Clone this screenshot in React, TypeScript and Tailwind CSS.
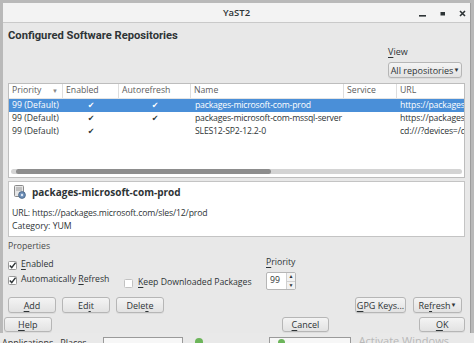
import React from "react";

const txt = "font-['Open_Sans',sans-serif] text-[#2e3436]";

function Btn({ className, children }: { className: string; children: React.ReactNode }) {
  return (
    <div
      className={
        "flex items-center justify-center whitespace-nowrap rounded-[3px] border border-[#b6b6b6] bg-gradient-to-b from-[#f4f4f4] to-[#e2e2e2] text-[9px] leading-none shadow-[0_1px_0_rgba(0,0,0,0.05)] " +
        className
      }
    >
      {children}
    </div>
  );
}

function U({ children }: { children: React.ReactNode }) {
  return <span className="underline decoration-[0.8px] underline-offset-[2px]">{children}</span>;
}

function Check({ on }: { on: boolean }) {
  return (
    <svg width="9" height="9" viewBox="0 0 9 9" className="shrink-0">
      <rect x="0.5" y="0.5" width="8" height="8" rx="1" fill="#fff" stroke={on ? "#9a9a9a" : "#c2c2c2"} />
      {on && <path d="M1.8 4.6 L3.7 6.6 L7.6 1.6" fill="none" stroke="#2e3436" strokeWidth="1.5" />}
    </svg>
  );
}

const cols = [
  { w: "w-[54px]", label: "Priority" },
  { w: "w-[56px]", label: "Enabled" },
  { w: "w-[72px]", label: "Autorefresh" },
  { w: "w-[153px]", label: "Name" },
  { w: "w-[53px]", label: "Service" },
  { w: "flex-1", label: "URL" },
];

const rows = [
  { p: "99 (Default)", e: true, a: true, n: "packages-microsoft-com-prod", s: "", u: "https://packages.microsoft.com/sles/12/prod", sel: true },
  { p: "99 (Default)", e: true, a: true, n: "packages-microsoft-com-mssql-server", s: "", u: "https://packages.microsoft.com/sles/12/mssql", sel: false },
  { p: "99 (Default)", e: true, a: false, n: "SLES12-SP2-12.2-0", s: "", u: "cd:///?devices=/dev/sr0", sel: false },
];

export default function App() {
  return (
    <div className={"w-[474px] h-[343px] overflow-hidden bg-[#b9b9b9] flex flex-col " + txt}>
      <div className="ml-[3px] mt-[3px] w-[468px] h-[330px] flex flex-col border-r border-[#9d9d9d]">
        {/* Title bar */}
        <div className="h-[20px] shrink-0 bg-[#f3f3f3] border-b border-[#c9c9c9] flex items-center relative">
          <div className="flex-1 text-center text-[9.5px] font-semibold leading-none">YaST2</div>
          <div className="absolute right-[4px] top-0 h-[20px] flex items-center gap-[13px]">
            <svg width="7" height="7" viewBox="0 0 7 7"><rect x="0" y="5" width="7" height="1.6" fill="#2e3436" /></svg>
            <svg width="7" height="7" viewBox="0 0 7 7"><rect x="1.5" y="2" width="4.5" height="3.5" fill="#2e3436" /></svg>
            <svg width="7" height="7" viewBox="0 0 7 7"><path d="M1 1 L6 6 M6 1 L1 6" stroke="#2e3436" strokeWidth="1.6" /></svg>
          </div>
        </div>

        {/* Body */}
        <div className="flex-1 bg-[#e8e8e8] flex flex-col px-[5px] text-[8.7px]">
          <div className="mt-[6px] h-[13px] leading-[13px] text-[11.2px] font-bold font-['Roboto',sans-serif]">
            Configured Software Repositories
          </div>

          <div className="mt-[4px] flex justify-end">
            <div className="mr-[3px] flex flex-col w-[74px]">
              <div className="h-[12px] leading-[12px] text-[9px]">
                <U>V</U>iew
              </div>
              <Btn className="mt-[4px] h-[16px] w-[74px] justify-between px-[4px] text-[8.7px]">
                <span>All repositories</span>
                <span className="text-[6px]">▼</span>
              </Btn>
            </div>
          </div>

          {/* Table */}
          <div className="mt-[5px] h-[95px] bg-white border border-[#bdbdbd] flex flex-col overflow-hidden">
            <div className="h-[15px] shrink-0 flex border-b border-[#e4e4e4]">
              {cols.map((c, i) => (
                <div
                  key={c.label}
                  className={
                    c.w +
                    " shrink-0 h-full flex items-center pl-[3px] text-[8.7px] text-[#5c5c5c] " +
                    (i < cols.length - 1 ? "border-r border-[#dedede]" : "")
                  }
                >
                  <span>{c.label}</span>
                  {i === 0 && <span className="ml-auto mr-[4px] text-[6px] text-[#888]">▼</span>}
                </div>
              ))}
            </div>
            {rows.map((r, i) => (
              <div
                key={i}
                className={
                  "h-[13px] shrink-0 flex items-center text-[8.7px] whitespace-nowrap " +
                  (r.sel ? "bg-[#4a8fd8] text-white" : "")
                }
              >
                <div className="w-[54px] shrink-0 pl-[3px]">{r.p}</div>
                <div className="w-[56px] shrink-0 text-center text-[8px] font-['DejaVu_Sans',sans-serif]">{r.e ? "✔" : ""}</div>
                <div className="w-[72px] shrink-0 text-center text-[8px] font-['DejaVu_Sans',sans-serif]">{r.a ? "✔" : ""}</div>
                <div className="w-[153px] shrink-0 pl-[4px] overflow-hidden tracking-[-0.2px]">{r.n}</div>
                <div className="w-[53px] shrink-0 pl-[4px]">{r.s}</div>
                <div className="flex-1 min-w-0 pl-[3px] overflow-hidden tracking-[-0.15px]">{r.u}</div>
              </div>
            ))}
            <div className="flex-1" />
            <div className="h-[5px] mb-[3px] mx-[2px] rounded-full bg-[#d4d4d4] flex">
              <div className="ml-[5px] w-[255px] h-full rounded-full bg-[#8d8d8d]" />
            </div>
          </div>

          {/* Details */}
          <div className="mt-[3px] h-[56px] bg-white border border-[#c4c4c4] flex flex-col px-[3px]">
            <div className="mt-[3px] h-[14px] flex items-center">
              <svg width="12" height="14" viewBox="0 0 12 14" className="ml-[2px]">
                <rect x="0.5" y="0.5" width="9" height="11" rx="1" fill="#e6e6e6" stroke="#8a8a8a" />
                <rect x="2" y="2.5" width="6" height="1" fill="#9a9a9a" />
                <rect x="2" y="4.5" width="6" height="1" fill="#9a9a9a" />
                <circle cx="8" cy="10" r="3.4" fill="#6e8fb8" stroke="#44607f" strokeWidth="0.8" />
                <circle cx="8" cy="10" r="1.2" fill="#dbe6f3" />
              </svg>
              <span className="ml-[6px] text-[10px] font-bold">packages-microsoft-com-prod</span>
            </div>
            <div className="mt-[8px] h-[12px] leading-[12px] tracking-[-0.15px]">URL: https://packages.microsoft.com/sles/12/prod</div>
            <div className="mt-[1px] h-[12px] leading-[12px]">Category: YUM</div>
          </div>

          <div className="mt-[3px] h-[12px] leading-[12px] text-[#4a4a4a]">Properties</div>

          <div className="mt-[3px] flex h-[35px]">
            <div className="w-[116px] shrink-0 flex flex-col pt-[4px]">
              <div className="h-[12px] flex items-center gap-[4px]">
                <Check on={true} />
                <span>
                  <U>E</U>nabled
                </span>
              </div>
              <div className="mt-[3px] h-[12px] flex items-center gap-[4px]">
                <Check on={true} />
                <span>
                  Automatically <U>R</U>efresh
                </span>
              </div>
            </div>
            <div className="w-[142px] shrink-0 pt-[22px]">
              <div className="h-[12px] flex items-center gap-[5px]">
                <Check on={false} />
                <span>
                  <U>K</U>eep Downloaded Packages
                </span>
              </div>
            </div>
            <div className="flex flex-col pt-[1px]">
              <div className="h-[12px] leading-[12px]">
                <U>P</U>riority
              </div>
              <div className="mt-[4px] h-[18px] w-[30px] flex border border-[#b6b6b6] rounded-[2px] bg-white">
                <div className="flex-1 flex items-center pl-[3px]">99</div>
                <div className="w-[9px] flex flex-col border-l border-[#d0d0d0] bg-[#f2f2f2]">
                  <div className="flex-1 flex items-center justify-center text-[5px] leading-none">▲</div>
                  <div className="flex-1 flex items-center justify-center text-[5px] leading-none border-t border-[#d0d0d0]">▼</div>
                </div>
              </div>
            </div>
          </div>

          <div className="mt-[7px] h-[16px] flex">
            <Btn className="w-[48px]">
              <U>A</U>dd
            </Btn>
            <Btn className="ml-[6px] w-[48px]">
              Ed<U>i</U>t
            </Btn>
            <Btn className="ml-[6px] w-[48px]">
              Dele<U>t</U>e
            </Btn>
            <div className="flex-1" />
            <Btn className="w-[51px]">
              <U>G</U>PG Keys...
            </Btn>
            <Btn className="ml-[7px] mr-[3px] w-[49px] justify-between px-[4px]">
              <span>
                Re<U>f</U>resh
              </span>
              <span className="text-[6px]">▼</span>
            </Btn>
          </div>

          <div className="mt-[4px] h-[15px] flex">
            <Btn className="ml-[-4px] w-[48px]">
              <U>H</U>elp
            </Btn>
            <Btn className="ml-[230px] w-[48px]">
              <U>C</U>ancel
            </Btn>
            <Btn className="ml-[90px] w-[46px]">
              <U>O</U>K
            </Btn>
          </div>
        </div>
      </div>

      {/* Taskbar strip */}
      <div className="h-[10px] bg-[#e9e9e9] flex items-start overflow-hidden relative">
        <div className="mt-[4px] ml-[2px] text-[9px] leading-[12px] text-[#333] whitespace-nowrap">Applications&nbsp;&nbsp;&nbsp;Places</div>
        <div className="ml-[16px] mt-[4px] w-[80px] h-[12px] border border-[#9a9a9a] bg-[#f7f7f7]" />
        <div className="ml-[12px] mt-[5px] w-[8px] h-[8px] rounded-full bg-[#6cb55a]" />
        <div className="ml-[66px] mt-[4px] w-[82px] h-[12px] border border-[#9a9a9a] bg-[#f7f7f7] flex">
          <div className="ml-[8px] mt-[1px] w-[7px] h-[7px] rounded-full bg-[#6cb55a]" />
        </div>
        <div className="ml-[8px] mt-[2px] text-[11px] leading-[12px] text-[#b8b8b8] whitespace-nowrap">Activate Windows</div>
      </div>
    </div>
  );
}
